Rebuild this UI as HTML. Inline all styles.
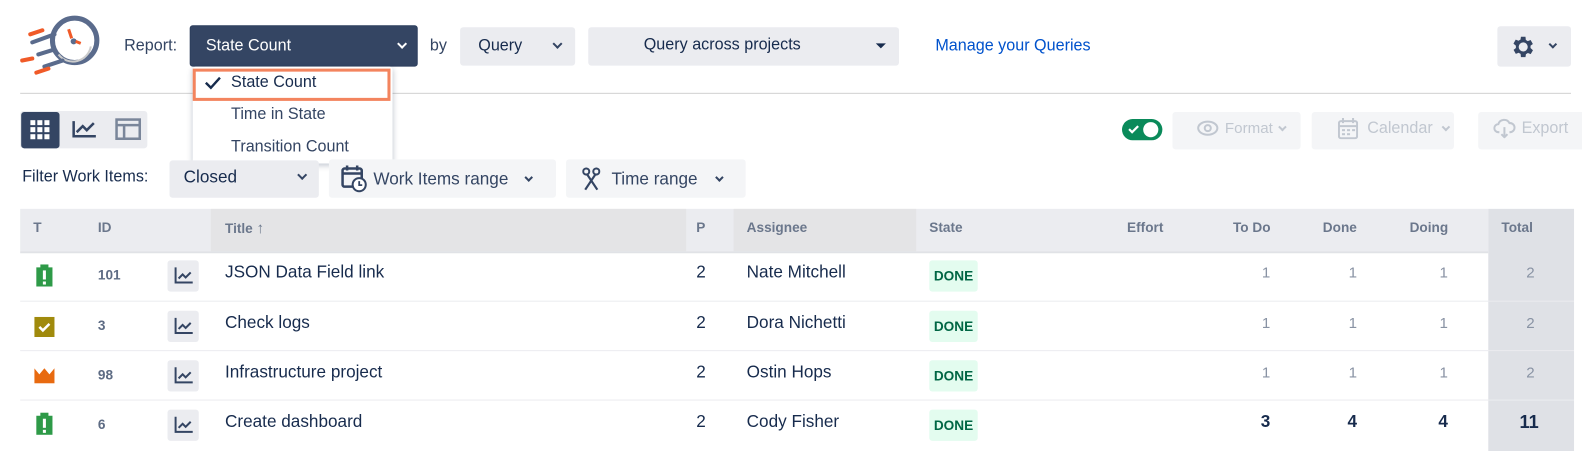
<!DOCTYPE html>
<html><head><meta charset="utf-8"><style>
*{box-sizing:border-box;margin:0;padding:0}
html,body{width:1582px;height:447px;overflow:hidden;background:#fff}
#w{position:absolute;left:0;top:0;width:1568px;height:443px;transform:scale(1.009);transform-origin:0 0;font-family:"Liberation Sans",sans-serif;color:#172b4d;font-size:16px}
.a{position:absolute}
.btn{position:absolute;background:#ebecf0;border-radius:3px}
.chev{position:absolute;width:7px;height:7px;border-right:2px solid #344563;border-bottom:2px solid #344563;transform:rotate(45deg)}
.hd{position:absolute;top:218px;font-size:13.5px;font-weight:bold;color:#6b778c}
.cell{position:absolute;font-size:17px}
.num{position:absolute;font-size:15px;color:#8993a4;text-align:right;width:40px}
.done{position:absolute;left:921px;width:48px;height:31px;background:#e3fcef;border-radius:3px;color:#006644;font-weight:bold;font-size:13.5px;text-align:center;line-height:31px}
.cb{position:absolute;left:166px;width:31px;height:31px;background:#ebecf0;border-radius:3px}
.rowline{position:absolute;left:20px;width:1540px;height:1px;background:#ebecf0}
</style></head><body><div id="w">
<svg class="a" style="left:18px;top:14px" width="84" height="64" viewBox="0 0 84 64">
<circle cx="56" cy="26" r="22" fill="none" stroke="#5a6b8c" stroke-width="5"/>
<path d="M40 40 A18 18 0 0 0 72 32" fill="none" stroke="#ccc" stroke-width="2"/>
<circle cx="55" cy="27" r="3" fill="#5a6b8c"/>
<path d="M53 24 L50 15 M57 27 L62 29" stroke="#f05a28" stroke-width="3"/>
<path d="M14 28 L36 20 M20 40 L36 35 M26 52 L44 46" stroke="#5a6b8c" stroke-width="4" stroke-linecap="round"/>
<path d="M12 20 L24 16 M4 46 L14 44 M18 58 L30 54" stroke="#f05a28" stroke-width="4" stroke-linecap="round"/>
</svg>
<div class="a" style="left:123px;top:37px;font-size:16px;color:#344563">Report:</div>
<div class="a" style="left:188px;top:25px;width:226px;height:41px;background:#344563;border-radius:3px;border:1px solid #2c3e5d"></div>
<div class="a" style="left:204px;top:37px;color:#fff;font-size:16px">State Count</div>
<div class="chev" style="left:395px;top:40px;border-color:#fff"></div>
<div class="a" style="left:426px;top:37px;color:#344563">by</div>
<div class="btn" style="left:456px;top:27px;width:114px;height:38px"></div>
<div class="a" style="left:474px;top:37px">Query</div>
<div class="chev" style="left:549px;top:40px"></div>
<div class="btn" style="left:583px;top:27px;width:308px;height:38px"></div>
<div class="a" style="left:638px;top:36px">Query across projects</div>
<div class="a" style="left:868px;top:43px;border:5px solid transparent;border-top:5px solid #172b4d"></div>
<div class="a" style="left:927px;top:37px;color:#0052cc">Manage your Queries</div>
<div class="btn" style="left:1484px;top:26px;width:73px;height:40px"></div>
<svg class="a" style="left:1495px;top:33px" width="27" height="27" viewBox="0 0 24 24"><path fill="#344563" d="M19.4 13a7.5 7.5 0 0 0 0-2l2.1-1.6-2-3.5-2.5 1a7.6 7.6 0 0 0-1.7-1L15 3h-4l-.4 2.6a7.6 7.6 0 0 0-1.7 1l-2.5-1-2 3.5L6.6 11a7.5 7.5 0 0 0 0 2l-2.1 1.6 2 3.5 2.5-1a7.6 7.6 0 0 0 1.7 1L11 21h4l.4-2.6a7.6 7.6 0 0 0 1.7-1l2.5 1 2-3.5zM13 16a4 4 0 1 1 0-8 4 4 0 0 1 0 8z"/></svg>
<div class="chev" style="left:1536px;top:41px;width:6px;height:6px"></div>
<div class="a" style="left:20px;top:92px;width:1537px;height:1px;background:#d0d0d0"></div>
<div class="a" style="left:20px;top:110px;width:126px;height:37px;background:#ebecf0;border-radius:3px"></div>
<div class="a" style="left:21px;top:111px;width:38px;height:36px;background:#344563;border-radius:3px"></div>
<svg class="a" style="left:30px;top:119px" width="20" height="20"><g fill="#fff"><rect x="0" y="0" width="5" height="5"/><rect x="7" y="0" width="5" height="5"/><rect x="14" y="0" width="5" height="5"/><rect x="0" y="7" width="5" height="5"/><rect x="7" y="7" width="5" height="5"/><rect x="14" y="7" width="5" height="5"/><rect x="0" y="14" width="5" height="5"/><rect x="7" y="14" width="5" height="5"/><rect x="14" y="14" width="5" height="5"/></g></svg>
<svg class="a" style="left:71px;top:118px" width="26" height="20"><path d="M2 2V17H24M5 13l6-6 4 4 7-7" fill="none" stroke="#344563" stroke-width="2.5"/></svg>
<svg class="a" style="left:114px;top:117px" width="26" height="22"><rect x="1.5" y="1.5" width="23" height="19" fill="none" stroke="#7a869a" stroke-width="2.5"/><path d="M2 7H24M9 7V20" stroke="#7a869a" stroke-width="2.5"/></svg>
<div class="a" style="left:191px;top:66px;width:198px;height:96px;background:#fff;border-radius:3px;box-shadow:0 2px 6px rgba(9,30,66,.25)"></div>
<div class="a" style="left:191px;top:68px;width:196px;height:32px;border:3px solid #f3845e"></div>
<svg class="a" style="left:202px;top:75px" width="18" height="14"><path d="M2 7l5 5L16 2" fill="none" stroke="#172b4d" stroke-width="2.4"/></svg>
<div class="a" style="left:229px;top:73px;color:#172b4d">State Count</div>
<div class="a" style="left:229px;top:105px;color:#344563">Time in State</div>
<div class="a" style="left:229px;top:137px;color:#344563">Transition Count</div>
<div class="a" style="left:1112px;top:118px;width:40px;height:21px;background:#0a8a5a;border-radius:11px"></div>
<div class="a" style="left:1133px;top:121px;width:15px;height:15px;background:#fff;border-radius:50%"></div>
<svg class="a" style="left:1118px;top:123px" width="12" height="10"><path d="M1 5l3 3 6-6" fill="none" stroke="#fff" stroke-width="2.2"/></svg>
<div class="a" style="left:1162px;top:111px;width:127px;height:37px;background:#f4f5f7;border-radius:3px"></div>
<svg class="a" style="left:1186px;top:119px" width="22" height="16"><ellipse cx="11" cy="8" rx="9.5" ry="6.5" fill="none" stroke="#c1c7d0" stroke-width="2"/><circle cx="11" cy="8" r="3" fill="none" stroke="#c1c7d0" stroke-width="2"/></svg>
<div class="a" style="left:1214px;top:119px;color:#c1c7d0;font-size:15px">Format</div>
<div class="chev" style="left:1268px;top:123px;width:6px;height:6px;border-color:#c1c7d0"></div>
<div class="a" style="left:1300px;top:111px;width:141px;height:37px;background:#f4f5f7;border-radius:3px"></div>
<svg class="a" style="left:1326px;top:117px" width="20" height="21"><rect x="1" y="3" width="18" height="17" rx="2" fill="none" stroke="#c1c7d0" stroke-width="2"/><path d="M1 8H19M5 0V5M15 0V5" stroke="#c1c7d0" stroke-width="2"/><g fill="#c1c7d0"><rect x="4" y="11" width="3" height="2"/><rect x="9" y="11" width="3" height="2"/><rect x="14" y="11" width="3" height="2"/><rect x="4" y="15" width="3" height="2"/><rect x="9" y="15" width="3" height="2"/></g></svg>
<div class="a" style="left:1355px;top:119px;color:#c1c7d0">Calendar</div>
<div class="chev" style="left:1430px;top:123px;width:6px;height:6px;border-color:#c1c7d0"></div>
<div class="a" style="left:1465px;top:111px;width:107px;height:37px;background:#f4f5f7;border-radius:3px"></div>
<svg class="a" style="left:1480px;top:117px" width="22" height="20"><path d="M6 14H5a4 4 0 0 1 0-8 6 6 0 0 1 11-1 4.5 4.5 0 0 1 1 9h-1M11 9v10M8 16l3 3 3-3" fill="none" stroke="#c1c7d0" stroke-width="2"/></svg>
<div class="a" style="left:1508px;top:119px;color:#c1c7d0">Export</div>
<div class="a" style="left:22px;top:167px;color:#172b4d">Filter Work Items:</div>
<div class="btn" style="left:168px;top:159px;width:148px;height:37px"></div>
<div class="a" style="left:182px;top:166px;font-size:17px">Closed</div>
<div class="chev" style="left:296px;top:170px"></div>
<div class="btn" style="left:326px;top:158px;width:225px;height:38px;background:#f4f5f7"></div>
<svg class="a" style="left:338px;top:163px" width="26" height="28"><rect x="1.5" y="4" width="19" height="18" rx="2" fill="none" stroke="#344563" stroke-width="2.5"/><path d="M1.5 9H20M6 1V6M16 1V6" stroke="#344563" stroke-width="2.5"/><circle cx="18" cy="20" r="6.5" fill="#fff" stroke="#344563" stroke-width="2"/><path d="M18 16.5V20.5H21" fill="none" stroke="#344563" stroke-width="1.8"/></svg>
<div class="a" style="left:370px;top:168px;color:#344563;font-size:17px">Work Items range</div>
<div class="chev" style="left:521px;top:173px;width:6px;height:6px"></div>
<div class="btn" style="left:561px;top:158px;width:178px;height:38px;background:#f4f5f7"></div>
<svg class="a" style="left:577px;top:166px" width="18" height="24"><circle cx="4" cy="4" r="3" fill="none" stroke="#344563" stroke-width="2"/><circle cx="14" cy="4" r="3" fill="none" stroke="#344563" stroke-width="2"/><path d="M5 7L15 22M13 7L3 22" stroke="#344563" stroke-width="2.2"/></svg>
<div class="a" style="left:606px;top:168px;color:#344563;font-size:17px">Time range</div>
<div class="chev" style="left:710px;top:173px;width:6px;height:6px"></div>
<div class="a" style="left:20px;top:207px;width:1455px;height:42px;background:#ebecf0"></div>
<div class="a" style="left:209px;top:207px;width:471px;height:42px;background:#e4e4e6"></div>
<div class="a" style="left:727px;top:207px;width:181px;height:42px;background:#e4e4e6"></div>
<div class="a" style="left:1475px;top:207px;width:85px;height:240px;background:#dfe1e6"></div>
<div class="a" style="left:20px;top:249px;width:1455px;height:2px;background:#e0e2e6"></div>
<div class="hd" style="left:33px">T</div>
<div class="hd" style="left:97px">ID</div>
<div class="hd" style="left:223px">Title <span style="font-size:15px">↑</span></div>
<div class="hd" style="left:690px">P</div>
<div class="hd" style="left:740px">Assignee</div>
<div class="hd" style="left:921px">State</div>
<div class="hd" style="left:1117px">Effort</div>
<div class="hd" style="left:1222px">To Do</div>
<div class="hd" style="left:1311px">Done</div>
<div class="hd" style="left:1397px">Doing</div>
<div class="hd" style="left:1488px">Total</div>
<div class="rowline" style="top:298px;width:1455px"></div>
<div class="rowline" style="top:347px;width:1455px"></div>
<div class="rowline" style="top:396px;width:1455px"></div>
<div class="a" style="left:1475px;top:298px;width:85px;height:1px;background:#ebecf0"></div>
<div class="a" style="left:1475px;top:347px;width:85px;height:1px;background:#ebecf0"></div>
<div class="a" style="left:1475px;top:396px;width:85px;height:1px;background:#ebecf0"></div>
<svg class="a" style="left:35px;top:262px" width="18" height="22"><path d="M5 0h8v3h4v19H1V3h4z" fill="#2e9a48"/><rect x="7.5" y="6" width="3" height="9" fill="#fff"/><rect x="7.5" y="17" width="3" height="3" fill="#fff"/></svg>
<svg class="a" style="left:34px;top:314px" width="20" height="20"><rect width="20" height="20" fill="#a08a0c"/><path d="M5 10l3.5 3.5L15 7" fill="none" stroke="#fff" stroke-width="2.5"/></svg>
<svg class="a" style="left:34px;top:365px" width="20" height="15"><path d="M0 0l5 6 5-6 5 6 5-6v15H0z" fill="#e86a10"/></svg>
<svg class="a" style="left:35px;top:409px" width="18" height="22"><path d="M5 0h8v3h4v19H1V3h4z" fill="#2e9a48"/><rect x="7.5" y="6" width="3" height="9" fill="#fff"/><rect x="7.5" y="17" width="3" height="3" fill="#fff"/></svg>
<div class="a" style="left:97px;top:265px;font-size:13.5px;font-weight:bold;color:#5e6c84">101</div>
<div class="a" style="left:97px;top:315px;font-size:13.5px;font-weight:bold;color:#5e6c84">3</div>
<div class="a" style="left:97px;top:364px;font-size:13.5px;font-weight:bold;color:#5e6c84">98</div>
<div class="a" style="left:97px;top:413px;font-size:13.5px;font-weight:bold;color:#5e6c84">6</div>
<div class="cb" style="top:258px"></div><div class="cb" style="top:308px"></div><div class="cb" style="top:357px"></div><div class="cb" style="top:406px"></div>
<svg class="a" style="left:173px;top:264px" width="19" height="18"><path d="M1 1V16H18M4 12l4-4 3 3 5-5" fill="none" stroke="#344563" stroke-width="2"/></svg>
<svg class="a" style="left:173px;top:314px" width="19" height="18"><path d="M1 1V16H18M4 12l4-4 3 3 5-5" fill="none" stroke="#344563" stroke-width="2"/></svg>
<svg class="a" style="left:173px;top:363px" width="19" height="18"><path d="M1 1V16H18M4 12l4-4 3 3 5-5" fill="none" stroke="#344563" stroke-width="2"/></svg>
<svg class="a" style="left:173px;top:412px" width="19" height="18"><path d="M1 1V16H18M4 12l4-4 3 3 5-5" fill="none" stroke="#344563" stroke-width="2"/></svg>
<div class="cell" style="left:223px;top:260px">JSON Data Field link</div>
<div class="cell" style="left:223px;top:310px">Check logs</div>
<div class="cell" style="left:223px;top:359px">Infrastructure project</div>
<div class="cell" style="left:223px;top:408px">Create dashboard</div>
<div class="cell" style="left:690px;top:260px">2</div><div class="cell" style="left:690px;top:310px">2</div><div class="cell" style="left:690px;top:359px">2</div><div class="cell" style="left:690px;top:408px">2</div>
<div class="cell" style="left:740px;top:260px">Nate Mitchell</div>
<div class="cell" style="left:740px;top:310px">Dora Nichetti</div>
<div class="cell" style="left:740px;top:359px">Ostin Hops</div>
<div class="cell" style="left:740px;top:408px">Cody Fisher</div>
<div class="done" style="top:258px">DONE</div><div class="done" style="top:308px">DONE</div><div class="done" style="top:357px">DONE</div><div class="done" style="top:406px">DONE</div>
<div class="num" style="left:1219px;top:262px">1</div><div class="num" style="left:1305px;top:262px">1</div><div class="num" style="left:1395px;top:262px">1</div><div class="num" style="left:1481px;top:262px">2</div>
<div class="num" style="left:1219px;top:312px">1</div><div class="num" style="left:1305px;top:312px">1</div><div class="num" style="left:1395px;top:312px">1</div><div class="num" style="left:1481px;top:312px">2</div>
<div class="num" style="left:1219px;top:361px">1</div><div class="num" style="left:1305px;top:361px">1</div><div class="num" style="left:1395px;top:361px">1</div><div class="num" style="left:1481px;top:361px">2</div>
<div class="num" style="left:1219px;top:408px;color:#172b4d;font-weight:bold;font-size:17px">3</div><div class="num" style="left:1305px;top:408px;color:#172b4d;font-weight:bold;font-size:17px">4</div><div class="num" style="left:1395px;top:408px;color:#172b4d;font-weight:bold;font-size:17px">4</div><div class="num" style="left:1485px;top:408px;color:#172b4d;font-weight:bold;font-size:18px">11</div>
</div></body></html>
